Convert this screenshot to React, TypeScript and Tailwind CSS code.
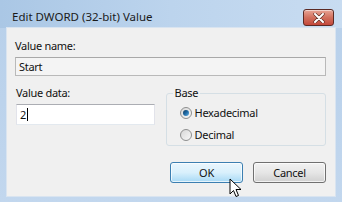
export default function App() {
  return (
    <div
      className="relative w-[342px] h-[202px] overflow-hidden flex flex-col bg-gradient-to-b from-[#b8d0ea] via-[#bcd3ec] to-[#c2d7ee] text-[11px] leading-[16px] tracking-[-0.3px] text-[#111]"
      style={{ fontFamily: '"Noto Sans", "Open Sans", sans-serif' }}
    >
      {/* title bar */}
      <div className="h-[28px] flex items-start bg-gradient-to-r from-[#aac7e5] via-[#bcd4ed] to-[#c8dcf1]">
        <span className="ml-[12px] mt-[9px] text-[11.5px] leading-[16px] tracking-normal text-[#1a1a1a]">Edit DWORD (32-bit) Value</span>
        <button className="ml-auto mr-[8px] mt-[9px] w-[31px] h-[17px] rounded-[3px] border border-[#5b2a24] bg-gradient-to-b from-[#e8a596] via-[#d1705e] to-[#c3473a] flex items-center justify-center shadow-[inset_0_1px_0_rgba(255,255,255,0.5)]">
          <svg width="12" height="10" viewBox="0 0 12 10">
            <path d="M2 1 L10 9 M10 1 L2 9" stroke="#5a2a22" strokeWidth="3.2" strokeLinecap="round" />
            <path d="M2 1 L10 9 M10 1 L2 9" stroke="#ffffff" strokeWidth="2" strokeLinecap="round" />
          </svg>
        </button>
      </div>

      {/* client area */}
      <div className="mx-[7px] h-[168px] bg-[#f0f0f0] shadow-[0_0_0_1px_#d9e4f0] pl-[8px] pr-[9px] pt-[10px] flex flex-col">
        <div className="h-[16px]">Value name:</div>
        <div className="mt-[3px] h-[19px] border border-[#b9b9b9] border-t-[#a8a8a8] bg-[#f4f4f4] pl-[3px] leading-[17px]">Start</div>

        <div className="mt-[9px] flex">
          <div className="w-[139px] flex flex-col ml-[1px]">
            <div className="h-[16px]">Value data:</div>
            <div className="mt-[3px] h-[21px] border border-[#e2e3ea] border-t-[#abadb3] border-b-[#e3e9ef] bg-white pl-[3px] flex items-center">
              <span>2</span>
              <span className="ml-[1px] w-[1px] h-[13px] bg-black" />
            </div>
          </div>

          <div className="ml-[11px] mt-[8px] w-[161px] h-[53px] relative border border-[#d5dfe5] rounded-[3px]">
            <span className="absolute left-[6px] top-[-9px] px-[2px] bg-[#f0f0f0]">Base</span>
            <div className="pl-[13px] pt-[11px] flex flex-col gap-[6px]">
              <Radio checked label="Hexadecimal" />
              <Radio label="Decimal" />
            </div>
          </div>
        </div>

        <div className="mt-[16px] flex justify-end gap-[10px]">
          <button className="w-[73px] h-[21px] rounded-[3px] border border-[#3c7fb1] bg-gradient-to-b from-[#eaf6fd] via-[#d9f0fc] to-[#a7d9f5] shadow-[inset_0_0_0_1px_rgba(255,255,255,0.7)] leading-[19px]">
            OK
          </button>
          <button className="w-[73px] h-[21px] rounded-[3px] border border-[#707070] bg-gradient-to-b from-[#f2f2f2] via-[#e6e6e6] to-[#d0d0d0] shadow-[inset_0_0_0_1px_rgba(255,255,255,0.7)] leading-[19px]">
            Cancel
          </button>
        </div>
      </div>

      {/* mouse pointer */}
      <svg className="absolute left-[229px] top-[178px]" width="14" height="21" viewBox="0 0 14 21">
        <path d="M1 1 L1 16 L4.5 12.5 L7 18.5 L9.5 17.5 L7 11.5 L12 11.5 Z" fill="#fff" stroke="#000" strokeWidth="1" strokeLinejoin="round" />
      </svg>
    </div>
  )
}

function Radio({ checked, label }: { checked?: boolean; label: string }) {
  return (
    <div className="flex items-center h-[16px]">
      <div className="w-[12px] h-[12px] rounded-full border border-[#8e8f8f] bg-gradient-to-br from-[#d8d8d8] to-[#f8f8f8] flex items-center justify-center">
        {checked && <div className="w-[6px] h-[6px] rounded-full bg-gradient-to-br from-[#0e3a5f] via-[#1f6aa5] to-[#62b3e6]" />}
      </div>
      <span className="ml-[3px]">{label}</span>
    </div>
  )
}
